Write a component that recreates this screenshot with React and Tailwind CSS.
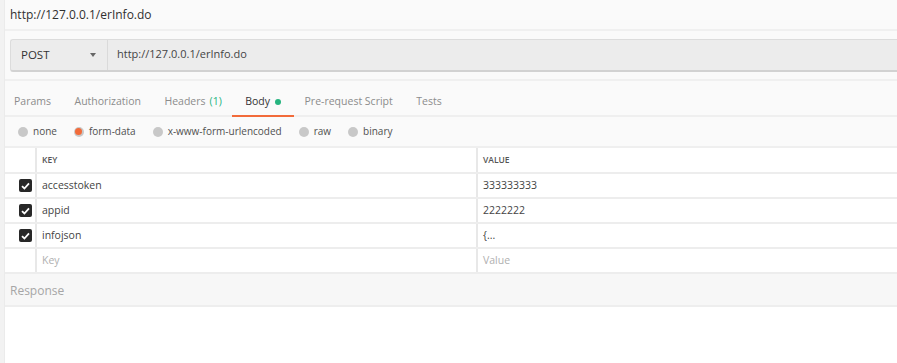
const tabs = [
  { label: "Params" },
  { label: "Authorization" },
  { label: "Headers", count: "(1)" },
  { label: "Body", active: true },
  { label: "Pre-request Script" },
  { label: "Tests" },
];

const modes = ["none", "form-data", "x-www-form-urlencoded", "raw", "binary"];

const rows = [
  { key: "accesstoken", value: "333333333" },
  { key: "appid", value: "2222222" },
  { key: "infojson", value: "{..." },
];

function Check() {
  return (
    <span className="w-[13px] h-[13px] rounded-[2px] bg-[#282828] flex items-center justify-center">
      <svg width="9" height="8" viewBox="0 0 9 8">
        <path d="M1 4.2 L3.4 6.5 L8 1.4" fill="none" stroke="#fff" strokeWidth="1.8" />
      </svg>
    </span>
  );
}

export default function App() {
  return (
    <div
      className="w-[897px] h-[363px] flex bg-[#f2f2f2] overflow-hidden text-[#333] text-[10.5px]"
      style={{ fontFamily: '"Open Sans", "Noto Sans", sans-serif' }}
    >
      <div className="w-[5px] shrink-0 border-r border-[#ebebeb]" />
      <div className="flex-1 flex flex-col bg-[#fafafa] min-w-0">
        <div className="h-[31px] shrink-0 flex items-center pl-[5px] text-[12px] text-[#303030] border-b-2 border-[#f0f0f0]">
          http://127.0.0.1/erInfo.do
        </div>

        <div className="h-[50px] shrink-0 flex items-center pl-[5px] border-b-2 border-[#f0f0f0]">
          <div className="flex-1 h-[33px] flex bg-[#ececec] border border-[#dcdcdc] border-b-2 border-b-[#d2d2d2] rounded-l-[3px] border-r-0">
            <div className="w-[97px] flex items-center justify-between pl-[10px] pr-[11px] border-r border-[#dadada]">
              <span className="text-[11.5px] text-[#333]">POST</span>
              <span className="w-0 h-0 border-l-[3.5px] border-r-[3.5px] border-t-[4px] border-l-transparent border-r-transparent border-t-[#666]" />
            </div>
            <div className="flex items-center pl-[9px] text-[11px] text-[#444]">
              http://127.0.0.1/erInfo.do
            </div>
          </div>
        </div>

        <div className="h-[36px] shrink-0 flex items-stretch pt-[7px] border-b-2 border-[#efefef]">
          {tabs.map((t) => (
            <div
              key={t.label}
              className={
                "flex items-center px-[9px] mr-[5.5px] relative " +
                (t.active ? "text-[#333]" : "text-[#8c8c8c]")
              }
            >
              <span>{t.label}</span>
              {t.count && <span className="ml-[4px] text-[#26b47f]">{t.count}</span>}
              {t.active && <span className="ml-[5px] w-[6px] h-[6px] rounded-full bg-[#26b47f]" />}
              {t.active && (
                <span className="absolute left-[-4px] right-[-4px] bottom-[-2px] h-[2px] bg-[#f26b3a]" />
              )}
            </div>
          ))}
        </div>

        <div className="h-[31px] shrink-0 flex items-center pl-[13px] gap-[17px] border-b-2 border-[#efefef]">
          {modes.map((m) => (
            <div key={m} className="flex items-center gap-[5px] text-[10px] text-[#505050]">
              <span className="w-[10px] h-[10px] rounded-full bg-[#c8c8c8] flex items-center justify-center">
                {m === "form-data" && <span className="w-[7px] h-[7px] rounded-full bg-[#f26b3a]" />}
              </span>
              <span>{m}</span>
            </div>
          ))}
        </div>

        <div className="shrink-0 bg-white">
          <div className="h-[26px] flex border-b-2 border-[#ededed]">
            <div className="w-[32px] border-r-2 border-[#e8e8e8]" />
            <div className="w-[441px] flex items-center pl-[5px] border-r-2 border-[#e8e8e8] text-[8.5px] font-semibold text-[#555]">
              KEY
            </div>
            <div className="flex-1 flex items-center pl-[5px] text-[8.5px] font-semibold text-[#555]">
              VALUE
            </div>
          </div>
          {rows.map((r) => (
            <div key={r.key} className="h-[25px] flex border-b-2 border-[#ededed]">
              <div className="w-[32px] border-r-2 border-[#e8e8e8] flex items-center justify-end pr-[3px]">
                <Check />
              </div>
              <div className="w-[441px] flex items-center pl-[5px] border-r-2 border-[#e8e8e8] text-[#444]">
                {r.key}
              </div>
              <div className="flex-1 flex items-center pl-[5px] text-[#444]">{r.value}</div>
            </div>
          ))}
          <div className="h-[25px] flex border-b-2 border-[#ededed]">
            <div className="w-[32px] border-r-2 border-[#e8e8e8]" />
            <div className="w-[441px] flex items-center pl-[5px] border-r-2 border-[#e8e8e8] text-[#b0b0b0]">
              Key
            </div>
            <div className="flex-1 flex items-center pl-[5px] text-[#b0b0b0]">Value</div>
          </div>
        </div>

        <div className="h-[33px] shrink-0 flex items-center pl-[5px] pt-[2px] bg-[#f7f7f7] border-b-2 border-[#eeeeee] text-[12px] text-[#a6a6a6]">
          Response
        </div>
        <div className="flex-1 bg-white" />
      </div>
    </div>
  );
}
